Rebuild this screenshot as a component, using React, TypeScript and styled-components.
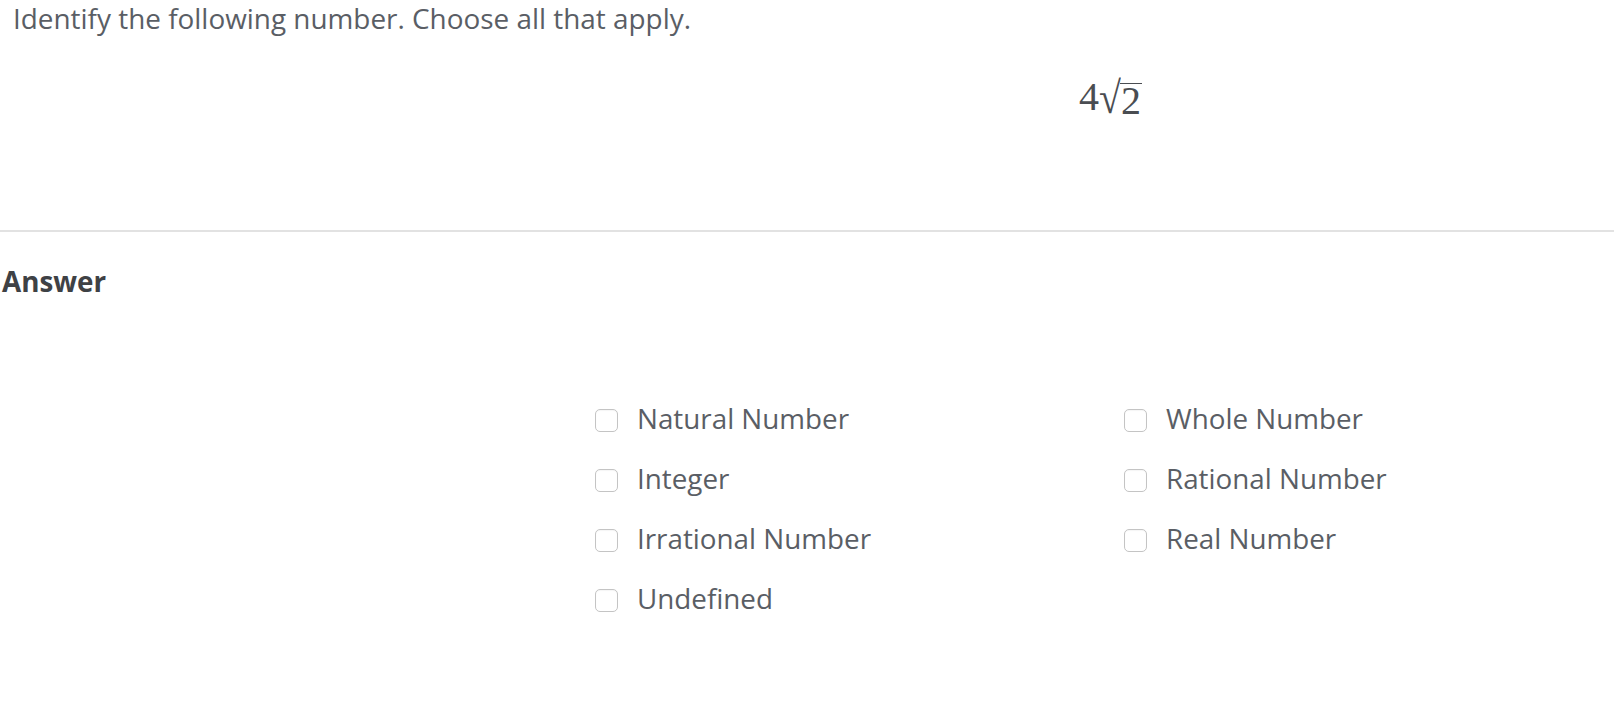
import React from "react";
import styled, { createGlobalStyle } from "styled-components";

const Global = createGlobalStyle`
  html, body { margin: 0; padding: 0; background: #fff; }
  body { font-family: "Open Sans", "Noto Sans", sans-serif; }
`;

const Page = styled.div`
  width: 1614px;
  min-height: 722px;
  display: flex;
  flex-direction: column;
`;

const Question = styled.section`
  padding: 0 0 0 13px;
  height: 230px;
  display: flex;
  flex-direction: column;
`;

const Prompt = styled.p`
  margin: 0;
  font-size: 27.9px;
  line-height: 36px;
  color: #5a5e65;
`;

const MathRow = styled.div`
  display: flex;
  padding-left: 1066px;
  padding-top: 40px;
`;

const MathExpr = styled.span`
  font-family: "Liberation Serif", "Times New Roman", serif;
  font-size: 40px;
  line-height: 42px;
  color: #4a4d52;
  display: inline-flex;
  align-items: flex-end;
`;

const Radical = styled.span`
  display: inline-block;
  transform: scaleY(1.12);
  transform-origin: 50% 30%;
`;

const Radicand = styled.span`
  border-top: 1.5px solid #4a4d52;
  line-height: 34px;
  padding: 0 1px 0 1px;
  margin-left: -1px;
`;

const Divider = styled.hr`
  margin: 0;
  border: none;
  border-top: 2px solid #e2e2e2;
  width: 100%;
`;

const AnswerTitle = styled.h2`
  margin: 0;
  padding: 32px 0 0 2px;
  font-size: 27.8px;
  line-height: 34px;
  font-weight: 700;
  color: #3e4145;
`;

const Options = styled.div`
  display: grid;
  grid-template-columns: 529px 300px;
  row-gap: 24px;
  padding: 102px 0 0 595px;
`;

const Option = styled.label`
  display: flex;
  align-items: flex-start;
  gap: 19px;
  height: 36px;
  cursor: pointer;
`;

const Box = styled.span`
  width: 21px;
  height: 21px;
  border: 1px solid #c4c4c4;
  border-radius: 5px;
  background: #fff;
  box-shadow: inset 0 1px 1px rgba(0, 0, 0, 0.04);
  box-sizing: content-box;
  flex: none;
  margin-top: 9px;
`;

const OptionText = styled.span`
  font-size: 27.8px;
  line-height: 36px;
  color: #5a5e65;
  white-space: nowrap;
`;

const options = [
  "Natural Number",
  "Whole Number",
  "Integer",
  "Rational Number",
  "Irrational Number",
  "Real Number",
  "Undefined",
];

export default function App() {
  return (
    <Page>
      <Global />
      <Question>
        <Prompt>Identify the following number. Choose all that apply.</Prompt>
        <MathRow>
          <MathExpr>
            4<Radical>√</Radical>
            <Radicand>2</Radicand>
          </MathExpr>
        </MathRow>
      </Question>
      <Divider />
      <AnswerTitle>Answer</AnswerTitle>
      <Options>
        {options.map((o) => (
          <Option key={o}>
            <Box />
            <OptionText>{o}</OptionText>
          </Option>
        ))}
      </Options>
    </Page>
  );
}
